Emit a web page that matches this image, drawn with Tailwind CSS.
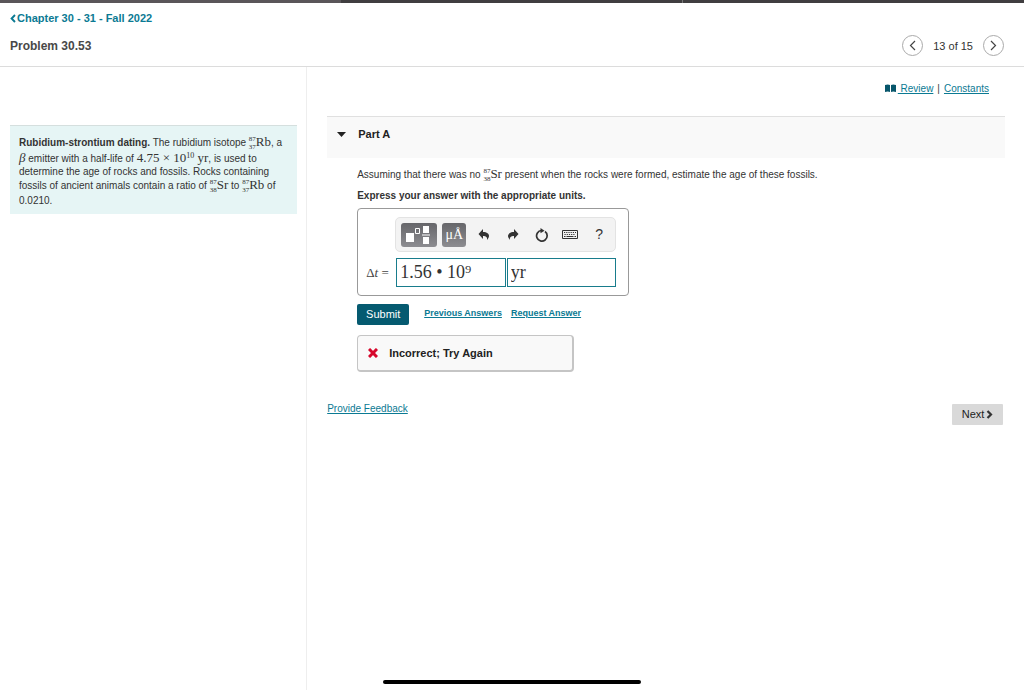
<!DOCTYPE html>
<html lang="en">
<head>
<meta charset="utf-8">
<meta name="viewport" content="width=device-width, initial-scale=1">
<title>Problem 30.53</title>
<script src="https://cdn.jsdelivr.net/npm/@tailwindcss/browser@4"></script>
</head>
<body class="flex min-h-screen flex-col bg-white font-['Liberation_Sans',sans-serif] text-[10px] leading-[13px] text-[#333]">
  <div class="flex h-[3px] bg-[#403e40]"><div class="w-1/3 bg-[#5a5659]"></div><div class="w-1/3 border-r border-[#777]"></div></div>
  <header class="flex h-16 items-start justify-between border-b border-[#dcdcdc] pr-5 pl-2.5">
    <div>
      <a href="#" class="mt-[7px] flex h-4 items-center text-[11px] font-bold text-[#0b7a93]">
        <svg class="mr-px h-[9px] w-[6px]" viewBox="0 0 6 9" fill="none" stroke="currentColor" stroke-width="1.9"><path d="M5 1 1.6 4.5 5 8"/></svg>Chapter 30 - 31 - Fall 2022</a>
      <h1 class="mt-3 text-[12px] leading-4 font-bold text-[#484848]">Problem 30.53</h1>
    </div>
    <nav class="mt-8 flex items-center gap-2.5 text-[11px]" aria-label="Problems">
      <button aria-label="Previous problem" class="flex size-[21px] items-center justify-center rounded-full border border-[#aaa]"><svg class="h-[11px] w-[7px]" viewBox="0 0 7 11" fill="none" stroke="#444" stroke-width="1.2"><path d="M6 1 1.5 5.5 6 10"/></svg></button>
      <span class="pt-0.5">13 of 15</span>
      <button aria-label="Next problem" class="flex size-[21px] items-center justify-center rounded-full border border-[#aaa]"><svg class="h-[11px] w-[7px]" viewBox="0 0 7 11" fill="none" stroke="#444" stroke-width="1.2"><path d="m1 1 4.5 4.500L1 10"/></svg></button>
    </nav>
  </header>
  <div class="flex grow">
    <aside class="w-[30%] shrink-0 border-r border-[#eee] pt-[58px] pr-[9px] pl-2.5">
      <p class="border-t border-[#d5dfde] bg-[#e6f5f5] pt-[9px] pr-3 pb-[7px] pl-[9px]"><b>Rubidium-strontium dating.</b> The rubidium isotope <span class="font-['Liberation_Serif',serif] text-[13px] whitespace-nowrap"><span class="inline-flex flex-col align-middle text-[7px] leading-[8px]"><span>87</span><span>37</span></span>Rb</span>, a <i class="font-['Liberation_Serif',serif] text-[13px]">β</i> emitter with a half-life of <span class="font-['Liberation_Serif',serif] text-[13px]">4.75 × 10<sup class="text-[8px]">10</sup> yr</span>, is used to determine the age of rocks and fossils. Rocks containing fossils of ancient animals contain a ratio of <span class="font-['Liberation_Serif',serif] text-[13px] whitespace-nowrap"><span class="inline-flex flex-col align-middle text-[7px] leading-[8px]"><span>87</span><span>38</span></span>Sr</span> to <span class="font-['Liberation_Serif',serif] text-[13px] whitespace-nowrap"><span class="inline-flex flex-col align-middle text-[7px] leading-[8px]"><span>87</span><span>37</span></span>Rb</span> of 0.0210.</p>
    </aside>
    <main class="min-w-0 grow pr-[19px] pl-5">
      <div class="flex h-[49px] items-start justify-end pt-[15px] pr-4 text-[#0b7a93]">
        <svg class="mt-0.5 mr-0.5 h-[9px] w-[11px]" viewBox="0 0 11 9" fill="#07566b"><path d="M0 1q3-1 5 0v7q-2-1-5 0zM6 1q2-1 5 0v7q-3-1-5 0z"/></svg>
        <a href="#" class="whitespace-pre underline"> Review</a><span class="mx-1 text-[#444]">|</span><a href="#" class="underline">Constants</a>
      </div>
      <section>
        <div class="flex h-[42px] border-t border-[#e0e0e0] bg-[#f9f9f9] pt-[9px] pl-[10px]">
          <button class="flex h-4 items-center text-[11px] font-bold text-[#222]"><svg class="mr-3 h-[5px] w-[9px]" viewBox="0 0 9 5"><path d="M0 0h9L4.5 5z" fill="#222"/></svg>Part A</button>
        </div>
        <div class="pl-[30px]">
          <p class="pt-[9px]">Assuming that there was no <span class="font-['Liberation_Serif',serif] text-[13px] whitespace-nowrap"><span class="inline-flex flex-col align-middle text-[7px] leading-[8px]"><span>87</span><span>38</span></span>Sr</span> present when the rocks were formed, estimate the age of these fossils.</p>
          <p class="mt-1.5 font-bold">Express your answer with the appropriate units.</p>
          <div class="mt-1.5 w-[272px] rounded-[4px] border border-[#999] py-2 pr-3 pl-2">
            <div class="ml-[29px] flex h-[35px] items-center rounded-[5px] border border-[#e3e3e3] bg-[#f3f3f3] pl-[5px] text-[#333]">
              <button aria-label="Templates" class="h-6 w-9 rounded-[3px] bg-linear-to-b from-[#66666a] to-[#8d8d91]"><svg class="h-6 w-9" viewBox="0 0 36 24" fill="#fff"><path d="M5 10h8v9H5zM22 3h6v7h-6zM22 14h6v7h-6zM21 11.5h8v1h-8z"/><path d="M14.5 5.5h4v5h-4z" fill="none" stroke="#fff"/></svg></button>
              <button aria-label="Units" class="ml-[5px] h-6 w-6 rounded-[3px] bg-linear-to-b from-[#66666a] to-[#8d8d91] font-['Liberation_Serif',serif] text-[14px] leading-6 text-white">μÅ</button>
              <button aria-label="Undo" class="ml-3"><svg class="h-3 w-3" viewBox="0 0 12 12" fill="#333"><path d="M5 0v3c4 0 6 2 6 4 0 1-1 3-2 4 .5-3-1-4-4-4v3L.5 5z"/></svg></button>
              <button aria-label="Redo" class="ml-[17px]"><svg class="h-3 w-3" viewBox="0 0 12 12" fill="#333"><path d="M7 0v3C3 3 1 5 1 7c0 1 1 3 2 4-.5-3 1-4 4-4v3l4.500-5z"/></svg></button>
              <button aria-label="Reset" class="ml-4"><svg class="h-[14px] w-[14px]" viewBox="0 0 14 14" fill="none" stroke="#333" stroke-width="1.7"><path d="M10 3.500A5.300 5.300 0 1 1 6.500 2.500"/><path d="m5.500 0 4 2.700-4 2.600z" fill="#333" stroke="none"/></svg></button>
              <button aria-label="Keyboard" class="ml-[13px]"><svg class="h-[11px] w-[16px]" viewBox="0 0 16 11" fill="none" stroke="#333"><path d="M.5 1.500h15v8H.5z"/><path d="M2 3.500h12M2.500 5.500h11" stroke-dasharray="1.200 1"/><path d="M2 7.500h1.500M4.500 7.500h7M12.500 7.500H14"/></svg></button>
              <button aria-label="Help" class="ml-[17px] text-[14px]">?</button>
            </div>
            <div class="mt-1.5 flex items-center font-['Liberation_Serif',serif]">
              <label for="value" class="w-[30px] shrink-0 text-[13px] text-[#444]">Δ<i>t</i> =</label>
              <input id="value" type="text" value="1.56 • 10⁹" class="h-[29px] min-w-0 flex-1 border border-[#187c8c] px-[3px] text-[18px]">
              <input aria-label="Units" type="text" value="yr" class="ml-px h-[29px] min-w-0 flex-1 border border-[#187c8c] px-[3px] text-[18px]">
            </div>
          </div>
          <div class="mt-2 flex items-start font-bold text-[#0b7a93]">
            <button class="h-[21px] w-[52px] rounded-[2px] bg-[#055a70] text-[11px] font-normal text-white">Submit</button>
            <a href="#" class="mt-[3px] ml-[15px] text-[9px] underline">Previous Answers</a>
            <a href="#" class="mt-[3px] ml-[9px] text-[9px] underline">Request Answer</a>
          </div>
          <div role="status" class="mt-2.5 flex h-[37px] w-[217px] items-center rounded-[4px] border border-r-2 border-b-2 border-[#c5c5c5] bg-[#f9f9f9] pl-2.5 text-[11px] font-bold text-[#222]">
            <svg class="mr-[11px] h-[10px] w-[10px]" viewBox="0 0 10 10" stroke="#d6082c" stroke-width="3"><path d="m1 1 8 8M9 1 1 9"/></svg>Incorrect; Try Again</div>
        </div>
      </section>
      <div class="mt-[30px] flex items-start justify-between">
        <a href="#" class="text-[#0b7a93] underline">Provide Feedback</a>
        <button class="mt-0.5 mr-0.5 flex h-[21px] w-[51px] items-center justify-center rounded-[1px] bg-[#d9d9d9] text-[11px] text-[#222]">Next<svg class="ml-0.5 h-[9px] w-[7px]" viewBox="0 0 7 9" fill="none" stroke="#333" stroke-width="2.200"><path d="m1.500 1 3.500 3.500L1.500 8"/></svg></button>
      </div>
    </main>
  </div>
  <div class="fixed bottom-1.5 left-1/2 h-1 w-[258px] -translate-x-1/2 rounded-full bg-black"></div>
</body>
</html>
